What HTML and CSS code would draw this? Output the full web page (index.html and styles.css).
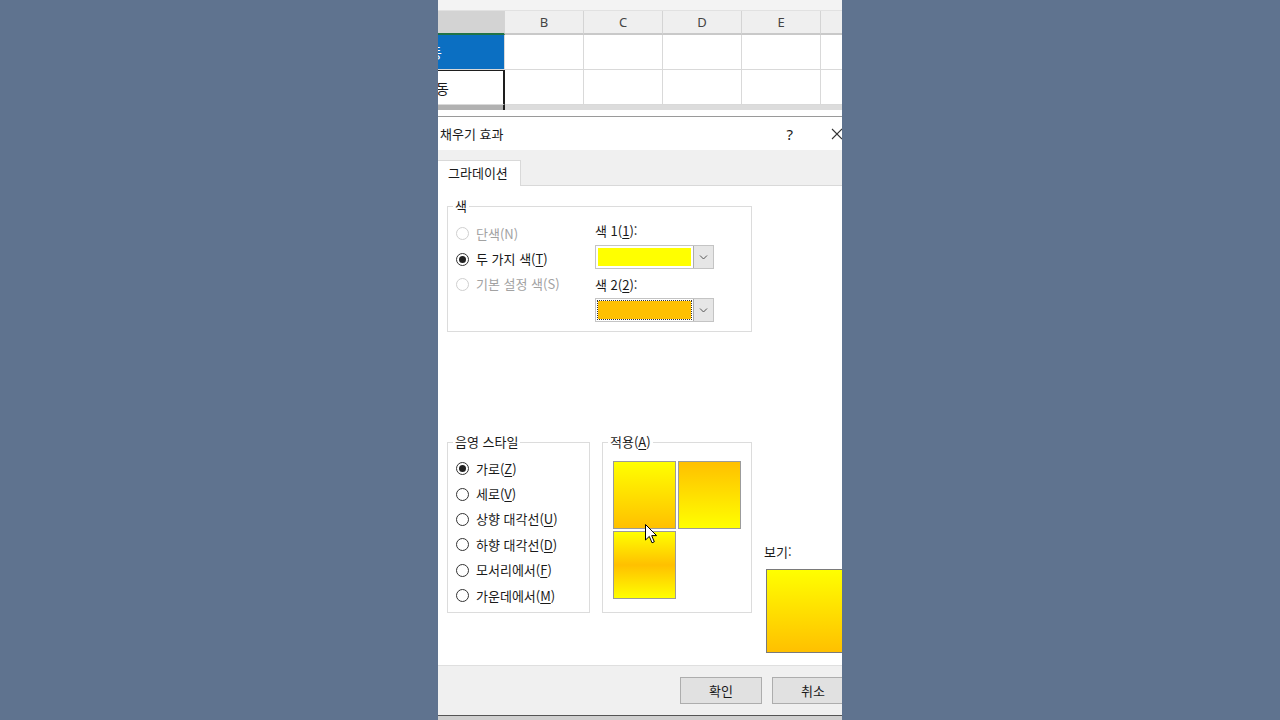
FILE: index.html
```html
<!DOCTYPE html>
<html lang="ko">
<head>
  <meta charset="UTF-8" />
  <title>채우기 효과</title>
  <link rel="stylesheet" href="styles.css">
</head>
<body>
  <div class="screen">

    <!-- 엑셀 시트 일부 -->
    <div class="sheet">
      <div class="sheetTop"></div>
      <div class="row head">
        <div class="cell colA"></div>
        <div class="cell">B</div>
        <div class="cell">C</div>
        <div class="cell">D</div>
        <div class="cell">E</div>
        <div class="cell"></div>
      </div>
      <div class="row">
        <div class="cell colA picked"><span class="clip1">등</span></div>
        <div class="cell"></div>
        <div class="cell"></div>
        <div class="cell"></div>
        <div class="cell"></div>
        <div class="cell"></div>
      </div>
      <div class="row">
        <div class="cell colA active"><span class="clip2">동</span></div>
        <div class="cell"></div>
        <div class="cell"></div>
        <div class="cell"></div>
        <div class="cell"></div>
        <div class="cell"></div>
      </div>
      <div class="band"><div class="bandA"></div></div>
    </div>

    <!-- 채우기 효과 대화상자 -->
    <div class="dialog">
      <div class="titlebar">
        <span>채우기 효과</span>
        <span class="help">?</span>
        <svg class="close" width="13" height="12" viewBox="0 0 13 12">
          <path d="M1 1 L11 11 M11 1 L1 11" stroke="#333" stroke-width="1.1" fill="none"/>
        </svg>
      </div>

      <div class="tabs">
        <div class="tab">그라데이션</div>
      </div>

      <div class="dlgBody">
        <fieldset class="groupColor">
          <legend>색</legend>
          <div class="groupInner">
            <div class="radios wide">
              <div class="radio off"><i></i><span>단색(N)</span></div>
              <div class="radio on"><i></i><span>두 가지 색(<u>T</u>)</span></div>
              <div class="radio off"><i></i><span>기본 설정 색(S)</span></div>
            </div>
            <div class="colors">
              <div class="lbl">색 1(<u>1</u>):</div>
              <div class="combo">
                <div class="swatch yellow"></div>
                <div class="drop">
                  <svg width="9" height="5" viewBox="0 0 9 5"><polyline points="1,0.5 4.5,4 8,0.5" stroke="#555" fill="none"/></svg>
                </div>
              </div>
              <div class="lbl second">색 2(<u>2</u>):</div>
              <div class="combo">
                <div class="swatch orange focus"></div>
                <div class="drop">
                  <svg width="9" height="5" viewBox="0 0 9 5"><polyline points="1,0.5 4.5,4 8,0.5" stroke="#555" fill="none"/></svg>
                </div>
              </div>
            </div>
          </div>
        </fieldset>

        <div class="lower">
          <fieldset class="groupShade">
            <legend>음영 스타일</legend>
            <div class="radios tall">
              <div class="radio on"><i></i><span>가로(<u>Z</u>)</span></div>
              <div class="radio"><i></i><span>세로(<u>V</u>)</span></div>
              <div class="radio"><i></i><span>상향 대각선(<u>U</u>)</span></div>
              <div class="radio"><i></i><span>하향 대각선(<u>D</u>)</span></div>
              <div class="radio"><i></i><span>모서리에서(<u>F</u>)</span></div>
              <div class="radio"><i></i><span>가운데에서(<u>M</u>)</span></div>
            </div>
          </fieldset>

          <fieldset class="groupApply">
            <legend>적용(<u>A</u>)</legend>
            <div class="variants">
              <div class="variant down"></div>
              <div class="variant up"></div>
              <div class="variant mid"></div>
            </div>
            <svg class="cursor" width="13" height="21" viewBox="0 0 13 21">
              <path d="M0.5 0.5 L0.5 16 L4.3 12.4 L7 18.8 L9.3 17.8 L6.7 11.6 L11.6 11.6 Z" fill="#fff" stroke="#000" stroke-width="1" stroke-linejoin="round"/>
            </svg>
          </fieldset>

          <div class="previewCol">
            <div class="lbl">보기:</div>
            <div class="preview"></div>
          </div>
        </div>
      </div>

      <div class="footer">
        <button class="btn">확인</button>
        <button class="btn">취소</button>
      </div>
    </div>

  </div>
</body>
</html>
```

FILE: styles.css
```css
* {
  box-sizing: border-box;
}

body {
  margin: 0;
  background-color: #5f738f;
  font-family: "Noto Sans CJK KR", "Noto Sans", sans-serif;
  font-size: 13px;
  color: #1a1a1a;
}

.screen {
  width: 404px;
  height: 720px;
  margin: 0 auto;
  overflow: hidden;
  background: #cfcfcf;
}

/* 시트 */
.sheet {
  background: #fff;
  height: 116px;
}

.sheetTop {
  height: 11px;
  background: #f3f3f3;
  border-bottom: 1px solid #e1e1e1;
}

.row {
  display: flex;
  height: 35px;
}

.cell {
  width: 79px;
  flex-shrink: 0;
  border-right: 1px solid #d9d9d9;
  border-bottom: 1px solid #d9d9d9;
  overflow: hidden;
  display: flex;
  align-items: center;
  font-size: 14px;
  line-height: 20px;
}

.cell.colA {
  width: 67px;
}

.row.head {
  height: 24px;
}

.head .cell {
  background: #efefef;
  border-right-color: #d4d4d4;
  border-bottom: 2px solid #c9c9c9;
  justify-content: center;
  font-family: "Noto Sans", sans-serif;
  font-size: 13px;
  color: #444;
}

.head .cell.colA {
  background: #d3d3d3;
  border-bottom-color: #217346;
}

.cell.picked {
  background: #0b6fc2;
  color: #fff;
}

.cell.active {
  border-top: 1px solid #1e1e1e;
  border-right: 2px solid #1e1e1e;
}

.clip1 {
  margin-left: -9px;
}

.clip2 {
  margin-left: -2px;
}

.band {
  height: 5px;
  background: #dcdcdc;
}

.bandA {
  width: 67px;
  height: 5px;
  background: #b1b1b1;
  border-right: 2px solid #1e1e1e;
}

/* 대화상자 */
.dialog {
  background: #fff;
  border-top: 1px solid #9a9a9a;
  border-bottom: 1px solid #555;
}

.titlebar {
  height: 33px;
  display: flex;
  align-items: center;
  padding-left: 2px;
  line-height: 18px;
}

.help {
  margin-left: auto;
  margin-right: 38px;
  font-family: "Noto Sans", sans-serif;
  font-size: 15px;
}

.close {
  flex-shrink: 0;
  margin-right: -2px;
}

.tabs {
  height: 36px;
  background: #f0f0f0;
  border-bottom: 1px solid #d9d9d9;
  display: flex;
  align-items: flex-end;
}

.tab {
  height: 26px;
  margin: 0 0 -1px -1px;
  padding: 0 12px 0 10px;
  background: #fff;
  border: 1px solid #d9d9d9;
  border-bottom: none;
  line-height: 24px;
}

.dlgBody {
  height: 479px;
  padding: 12px 0 0 9px;
  overflow: hidden;
}

fieldset {
  margin: 0;
  padding: 0;
  min-width: 0;
  flex-shrink: 0;
  border: 1px solid #dcdcdc;
}

legend {
  padding: 0 2px;
  margin-left: 5px;
  line-height: 16px;
}

.groupColor {
  width: 305px;
}

.groupInner {
  display: flex;
}

.radios {
  padding: 7px 0 0 8px;
}

.radios.wide {
  width: 147px;
}

.radios.tall {
  padding: 6px 0 4px 8px;
}

.radio {
  display: flex;
  align-items: center;
  gap: 7px;
  height: 25.4px;
  line-height: 18px;
  white-space: nowrap;
}

.radio i {
  width: 13px;
  height: 13px;
  flex-shrink: 0;
  border: 1px solid #333;
  border-radius: 50%;
  background: #fff;
  display: flex;
  align-items: center;
  justify-content: center;
}

.radio.on i::after {
  content: "";
  width: 7px;
  height: 7px;
  border-radius: 50%;
  background: #222;
}

.radio.off {
  color: #a2a2a2;
}

.radio.off i {
  border-color: #cfcfcf;
}

u {
  text-underline-offset: 2px;
}

.colors {
  padding: 8px 0 9px 0;
}

.lbl {
  line-height: 18px;
  margin-bottom: 5px;
  white-space: nowrap;
}

.lbl.second {
  margin: 7px 0 4px;
}

.combo {
  display: flex;
  width: 119px;
  height: 24px;
  border: 1px solid #c4c4c4;
  background: #fff;
}

.combo .swatch {
  flex: 1;
  margin: 2px;
}

.swatch.yellow {
  background: #ffff00;
}

.swatch.orange {
  background: #ffc000;
  outline: 1px dotted #333;
}

.combo .drop {
  width: 20px;
  background: #e6e6e6;
  border-left: 1px solid #acacac;
  display: flex;
  align-items: center;
  justify-content: center;
}

.lower {
  display: flex;
  align-items: flex-start;
  gap: 12px;
  margin-top: 102px;
}

.groupShade {
  width: 143px;
}

.groupApply {
  width: 150px;
  position: relative;
}

.variants {
  display: grid;
  grid-template-columns: 63px 63px;
  grid-auto-rows: 68px;
  gap: 2px;
  padding: 11px 0 13px 10px;
}

.variant {
  border: 1px solid #9b9b9b;
}

.variant.down {
  background: linear-gradient(#ffff00, #ffc000);
}

.variant.up {
  background: linear-gradient(#ffc000, #ffff00);
}

.variant.mid {
  background: linear-gradient(#ffff00, #ffc000 50%, #ffff00);
}

.cursor {
  position: absolute;
  left: 42px;
  top: 74px;
}

.previewCol {
  flex-shrink: 0;
  padding-top: 110px;
}

.previewCol .lbl {
  line-height: 16px;
  margin: 0;
}

.preview {
  width: 90px;
  height: 84px;
  margin: 9px 0 0 2px;
  border: 1px solid #7a7a7a;
  background: linear-gradient(#ffff00, #ffc000);
}

.footer {
  height: 50px;
  background: #f0f0f0;
  border-top: 1px solid #dfdfdf;
  display: flex;
  gap: 10px;
  padding: 11px 0 0 242px;
}

.btn {
  width: 82px;
  height: 27px;
  flex-shrink: 0;
  background: #e1e1e1;
  border: 1px solid #adadad;
  font-family: "Noto Sans CJK KR", sans-serif;
  font-size: 13px;
  color: #1a1a1a;
  padding: 0;
}
```
